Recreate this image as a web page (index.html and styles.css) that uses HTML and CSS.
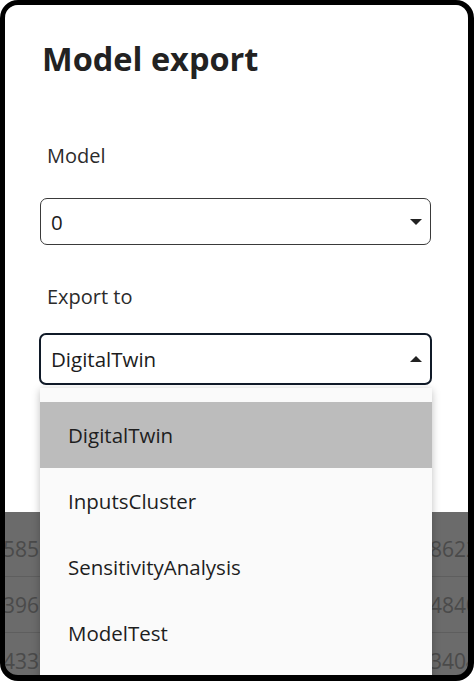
FILE: index.html
```html
<!DOCTYPE html>
<html lang="en">
<head>
  <meta charset="UTF-8">
  <title>Model export</title>
  <link rel="stylesheet" href="styles.css">
</head>
<body>

  <div class="frame">
    <!-- Dialog sheet -->
    <div class="dialog">
      <h1>Model export</h1>

      <div class="field">
        <label for="model">Model</label>
        <div class="select" id="model">
          <span>0</span>
          <span class="arrow down"></span>
        </div>
      </div>

      <div class="field">
        <label for="target">Export to</label>
        <div class="select open" id="target">
          <span>DigitalTwin</span>
          <span class="arrow up"></span>
        </div>
      </div>
    </div>

    <!-- Table behind the backdrop -->
    <div class="backdrop">
      <div class="row"><span class="left">5859</span><span class="right">8622</span></div>
      <div class="row"><span class="left">3969</span><span class="right">4840</span></div>
      <div class="row"><span class="left">4337</span><span class="right">3404</span></div>
    </div>

    <!-- Open dropdown list -->
    <ul class="menu">
      <li class="selected">DigitalTwin</li>
      <li>InputsCluster</li>
      <li>SensitivityAnalysis</li>
      <li>ModelTest</li>
    </ul>
  </div>

</body>
</html>
```

FILE: styles.css
```css
body {
  margin: 0;
  background: #fff;
  font-family: "Open Sans", "Noto Sans", sans-serif;
}
.frame {
  position: relative;
  width: 474px;
  height: 681px;
  box-sizing: border-box;
  border: 5px solid #000;
  border-right-width: 6px;
  border-bottom-width: 6px;
  border-radius: 18px;
  overflow: hidden;
  background: #6b6b6b;
}
.dialog {
  height: 507px;
  background: #fff;
  padding: 31px 37px 0 35px;
  box-sizing: border-box;
}
h1 {
  margin: 0 0 0 2px;
  font-size: 32.5px;
  line-height: 46px;
  font-weight: 700;
  color: #222;
}
.field {
  margin-top: 60px;
}
.field + .field {
  margin-top: 38px;
}
label {
  display: block;
  margin-left: 7px;
  font-size: 20px;
  line-height: 28px;
  color: #2b2b2b;
}
.select {
  margin-top: 28px;
  height: 47px;
  box-sizing: border-box;
  border: 1.5px solid #3a3a3a;
  border-radius: 7px;
  display: flex;
  align-items: center;
  justify-content: space-between;
  padding: 0 8px 0 10px;
  font-size: 20.5px;
  color: #1c1c1c;
}
.select.open {
  margin-top: 22px;
  height: 52px;
  margin-left: -1px;
  margin-right: -1px;
  border: 2.5px solid #101a28;
}
.arrow {
  width: 0;
  height: 0;
  border-left: 6px solid transparent;
  border-right: 6px solid transparent;
}
.arrow.down {
  border-top: 6px solid #222;
}
.arrow.up {
  border-bottom: 6px solid #222;
}
.backdrop {
  padding-top: 9px;
  color: #4a4a4a;
  font-size: 21px;
}
.row {
  height: 55px;
  border-bottom: 1px solid #5e5e5e;
  display: flex;
  justify-content: space-between;
  align-items: center;
}
.left {
  margin-left: -2px;
}
.right {
  margin-right: -10px;
}
.menu {
  position: absolute;
  left: 35px;
  top: 383px;
  width: 392px;
  margin: 0;
  padding: 14px 0 20px;
  list-style: none;
  background: #fafafa;
  box-shadow: 0 2px 8px rgba(0, 0, 0, 0.25);
}
.menu li {
  height: 66px;
  line-height: 66px;
  padding-left: 28px;
  font-size: 20.5px;
  color: #1e1e1e;
}
.menu li.selected {
  background: #bcbcbc;
}
```
